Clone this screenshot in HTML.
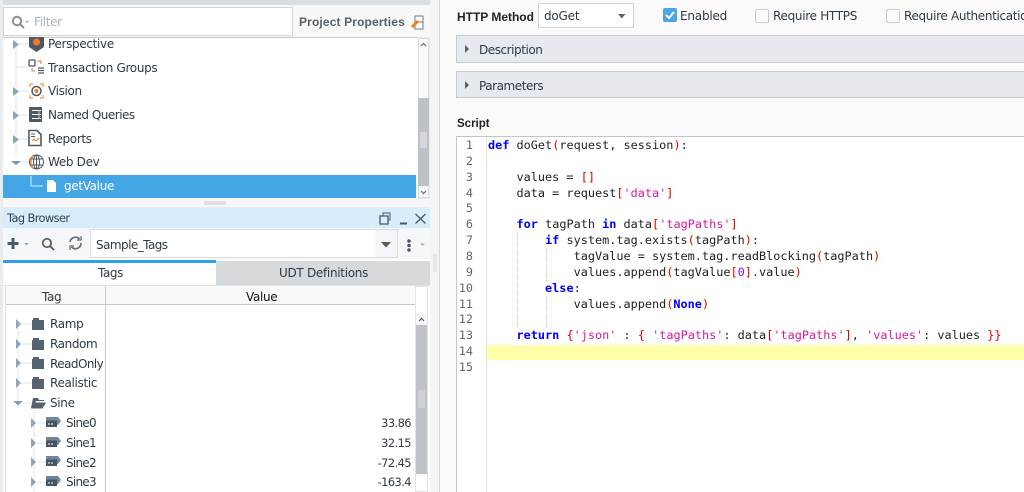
<!DOCTYPE html>
<html><head><meta charset="utf-8">
<style>
html,body{margin:0;padding:0}
body{width:1024px;height:492px;position:relative;overflow:hidden;background:#fafafa;font-family:"DejaVu Sans","Liberation Sans",sans-serif;font-size:12px;color:#2b3640}
.a{position:absolute}
.t{position:absolute;white-space:pre;line-height:16px;font-size:12px;letter-spacing:-.33px;color:#2e3a45}
.h{font-family:"Liberation Sans",sans-serif;font-weight:bold}
.c{position:absolute;left:488px;white-space:pre;font-family:"DejaVu Sans Mono",monospace;font-size:11.850px;line-height:16px;color:#222}
.n{position:absolute;width:16px;text-align:right;left:457px;font-family:"DejaVu Sans Mono",monospace;font-size:11.800px;line-height:16px;color:#666}
.k{color:#0000ff;font-weight:bold}.b{color:#e00000}.s{color:#d6189a}.p{color:#8a10e0}
svg{position:absolute;overflow:visible}
.r{text-align:right;width:60px;left:351px;font-size:11.400px;letter-spacing:-.55px}
.d{letter-spacing:-.75px}
</style></head><body>
<!-- left column -->
<div class="a" style="left:0;top:0;width:432px;height:492px;background:#e9ecef"></div>
<div class="a" style="left:3px;top:0;width:427px;height:5px;background:#d9dee2"></div>
<div class="a" style="left:3px;top:5px;width:427px;height:32px;background:#f8f8f8"></div>
<div class="a" style="left:3px;top:7px;width:290px;height:29px;background:#fff;border:1px solid #d3d7da;box-sizing:border-box"></div>
<svg style="left:0;top:0" width="60" height="40"><circle cx="17" cy="21" r="4.200" fill="none" stroke="#8a9096" stroke-width="2"/><path d="M20 24l4 4" stroke="#8a9096" stroke-width="2"/><path d="M25 21h4l-2 2z" fill="#a0a6ab"/></svg>
<div class="t" style="left:34px;top:14px;color:#aab4bd">Filter</div>
<div class="t h" style="left:299px;top:14px;color:#56616b;font-size:12px;letter-spacing:.14px">Project Properties</div>
<svg style="left:410px;top:14px" width="16" height="16"><path d="M5 2h8v13H5z" fill="#fff" stroke="#6c7a86"/><path d="M8 8h5" stroke="#6c7a86"/><path d="M2 13l6-6" stroke="#f47b20" stroke-width="3"/></svg>
<!-- tree -->
<div class="a" style="left:3px;top:37px;width:415px;height:162px;background:#fff;border-top:1px solid #c5cacf;box-sizing:border-box"></div>
<div class="a" style="left:3px;top:175px;width:413px;height:23px;background:#44a6e4"></div>
<div class="a" style="left:418px;top:38px;width:11px;height:160px;background:#f8f9fa;border:1px solid #d8dcdf;box-sizing:border-box"></div>
<div class="a" style="left:418px;top:98px;width:11px;height:88px;background:#bcc2c7"></div>
<svg style="left:418px;top:38px" width="11" height="160"><path d="M3 8l2.500-2.500L8 8" fill="none" stroke="#667" stroke-width="1.200"/><path d="M3 153l2.500 2.500L8 153" fill="none" stroke="#667" stroke-width="1.200"/><path d="M2 95h7M2 97h7M2 99h7M2 101h7M2 103h7M2 105h7M2 107h7M2 109h7" stroke="#eef0f1" stroke-width="1"/></svg>
<svg style="left:0;top:37px" width="60" height="162" fill="none">
<path d="M16 0V118M16 7h12M16 30h12M16 54h12M16 78h12M16 102h12M21 125h7" stroke="#dfe3e6"/>
<path d="M31 139V149H43" stroke="#d9ecf9" stroke-width="1"/>
<g fill="#8ea4b8"><path d="M13 3l6 4.500-6 4.500zM13 50l6 4.500-6 4.500zM13 74l6 4.500-6 4.500zM13 98l6 4.500-6 4.500z"/><path d="M11 124h10l-5 4z" fill="#7d92a5"/></g>
<path d="M29 0h15v10l-7.500 5-7.500-5z" fill="#4d5a66"/><circle cx="36.500" cy="5" r="3.500" fill="#f47b20"/>
<rect x="29" y="23" width="6" height="6" rx="1" stroke="#4d5a66" stroke-width="1.300"/><path d="M37 24h4v3M35 34h-3v-3" stroke="#f47b20"/><path d="M38 31h6M38 33.500h6M38 36h6" stroke="#4d5a66" stroke-width="1.300"/>
<circle cx="36.500" cy="54" r="4.500" stroke="#4d5a66" stroke-width="1.500"/><circle cx="36.500" cy="54" r="2" fill="#f47b20"/><path d="M30 50v-3h3M40 47h3v3M43 58v3h-3M33 61h-3v-3" stroke="#f47b20"/>
<rect x="29" y="70" width="13" height="15" rx="1" fill="#4d5a66"/><path d="M32 73.500h9M32 77.500h9M32 81.500h9" stroke="#fff"/><path d="M39 73v9" stroke="#f0b27a"/>
<path d="M29 93.500h8l4 4v11H29z" fill="#fff" stroke="#4d5a66" stroke-width="1.600"/><path d="M32 104l2-2 2 2 3-3" stroke="#f47b20"/><path d="M31 97h4M31 99.500h4" stroke="#4d5a66"/>
<circle cx="36.500" cy="125" r="7" fill="#fff" stroke="#4d5a66"/><ellipse cx="36.500" cy="125" rx="3" ry="7" stroke="#4d5a66"/><path d="M30 122h13M30 128h13M36.500 118v14" stroke="#4d5a66"/><path d="M33 119a9 9 0 0 0 0 12" stroke="#f47b20" stroke-width="1.500"/>
<path d="M47 143h6l3 3v9h-9z" fill="#fff"/>
</svg>
<div class="t" style="left:48px;top:36px">Perspective</div>
<div class="t" style="left:48px;top:60px">Transaction Groups</div>
<div class="t" style="left:48px;top:83px">Vision</div>
<div class="t" style="left:48px;top:107px;letter-spacing:-.5px">Named Queries</div>
<div class="t" style="left:48px;top:131px">Reports</div>
<div class="t" style="left:48px;top:154px">Web Dev</div>
<div class="t" style="left:64px;top:178px;color:#fff">getValue</div>
<!-- splitter -->
<div class="a" style="left:3px;top:199px;width:427px;height:8px;background:#f6f7f8"></div>
<svg style="left:204px;top:201px" width="26" height="5"><path d="M1 0v4M3 0v4M5 0v4M7 0v4M9 0v4M11 0v4M13 0v4M15 0v4M17 0v4M19 0v4M21 0v4" stroke="#c8ccd0"/></svg>
<!-- Tag Browser -->
<div class="a" style="left:3px;top:208px;width:427px;height:284px;background:#fff"></div>
<div class="a" style="left:3px;top:208px;width:427px;height:20px;background:#d6edfc"></div>
<div class="t" style="left:7px;top:210px;color:#35424d;font-size:11.400px;letter-spacing:-.6px">Tag Browser</div>
<svg style="left:375px;top:210px" width="55" height="18" fill="none" stroke="#48586a"><path d="M5 6v8h8V6z" stroke-width="1.300"/><path d="M8 6V3h7v7h-2" stroke-width="1"/><path d="M25 13.500h7" stroke-width="2"/><path d="M40.500 4l10 9.500M50.500 4l-10 9.500" stroke-width="1.300"/></svg>
<div class="a" style="left:3px;top:228px;width:427px;height:31px;background:#f6f7f8"></div>
<svg style="left:3px;top:228px" width="90" height="30" fill="none"><path d="M10 10v11M4.500 15.500h11" stroke="#4a5a6a" stroke-width="3"/><path d="M21 15h5l-2.500 2.500z" fill="#a7adb3"/><circle cx="44" cy="15" r="4.200" stroke="#4a5a6a" stroke-width="1.700"/><path d="M47 18l4 4" stroke="#4a5a6a" stroke-width="1.800"/><path d="M67 14a5.500 5.500 0 0 1 9.500-3M78 15a5.500 5.500 0 0 1-9.500 4" stroke="#5b6a78" stroke-width="1.600"/><path d="M78 8v4h-4M67 22v-4h4" stroke="#5b6a78" stroke-width="1.200"/></svg>
<div class="a" style="left:90px;top:229px;width:308px;height:29px;background:#fff;border:1px solid #dadde0;box-sizing:border-box"></div>
<div class="a" style="left:375px;top:230px;width:22px;height:27px;background:#f4f5f6"></div>
<div class="t" style="left:96px;top:237px;letter-spacing:-.55px">Sample_Tags</div>
<svg style="left:380px;top:240px" width="50" height="12"><path d="M1 2h10l-5 5.500z" fill="#4f5d6b"/><circle cx="29" cy="1" r="1.800" fill="#4a5a6a"/><circle cx="29" cy="5.500" r="1.800" fill="#4a5a6a"/><circle cx="29" cy="10" r="1.800" fill="#4a5a6a"/><path d="M40 3.500h5l-2.500 2.500z" fill="#a7adb3"/></svg>
<!-- tabs -->
<div class="a" style="left:3px;top:260px;width:213px;height:25px;background:#fff;border-top:3px solid #2d9fe6;box-sizing:border-box"></div>
<div class="a" style="left:216px;top:261px;width:214px;height:24px;background:#d7dadd"></div>
<div class="t" style="left:98px;top:265px;letter-spacing:-.4px">Tags</div>
<div class="t" style="left:279px;top:265px;letter-spacing:-.3px">UDT Definitions</div>
<div class="a" style="left:3px;top:285px;width:427px;height:1px;background:#dfe2e5"></div>
<!-- table -->
<div class="a" style="left:5px;top:286px;width:410px;height:19px;background:#f9f9f9;border-bottom:1px solid #c3c8cc;box-sizing:border-box"></div>
<div class="a" style="left:105px;top:286px;width:1px;height:206px;background:#c8ccd0"></div>
<div class="a" style="left:5px;top:286px;width:1px;height:206px;background:#dfe2e5"></div>
<div class="t" style="left:42px;top:289px">Tag</div>
<div class="t" style="left:246px;top:289px;color:#111">Value</div>
<div class="a" style="left:415px;top:286px;width:13px;height:206px;background:#fff;border:1px solid #e2e5e7;box-sizing:border-box"></div>
<div class="a" style="left:416px;top:313px;width:11px;height:12px;background:#f6f7f8"></div>
<div class="a" style="left:416px;top:325px;width:11px;height:149px;background:#bcc2c7"></div>
<svg style="left:416px;top:313px" width="11" height="110"><path d="M3 8l2.500-2.500L8 8" fill="none" stroke="#556" stroke-width="1.200"/><path d="M2 78h7M2 80h7M2 82h7M2 84h7M2 86h7M2 88h7M2 90h7M2 92h7M2 94h7" stroke="#dfe2e4"/></svg>
<svg style="left:0;top:305px" width="105" height="187" fill="none">
<path d="M18 19v84M18 19h14M18 39h14M18 58h14M18 78h14M24 98h7M34 105v82M36 118h10M36 138h10M36 157h10M36 177h10" stroke="#dfe3e6"/>
<g fill="#8ea4b8"><path d="M16 14l5 5-5 5zM16 34l5 5-5 5zM16 53l5 5-5 5zM16 73l5 5-5 5zM31 113l5 5-5 5zM31 133l5 5-5 5zM31 152l5 5-5 5zM31 172l5 5-5 5z"/><path d="M13 96h10l-5 4.500z" fill="#8a9eb0"/></g>
<g fill="#55626f"><path d="M32 15h12v10H32zM33 13h6v2h-6zM32 35h12v10H32zM33 33h6v2h-6zM32 54h12v10H32zM33 52h6v2h-6zM32 74h12v10H32zM33 72h6v2h-6z"/><path d="M31 103l2-10h5l1 2h5v1H36l-3 7z"/><path d="M31 103.500l3.500-6H46l-3.500 6z"/></g>
<g><path d="M46 112h12l3 4-3 4H46z" fill="#6f879d"/><rect x="46" y="115.500" width="11" height="6.500" fill="#47555f"/><path d="M48 119h2M51 119h2" stroke="#fff"/></g>
<g><path d="M46 132h12l3 4-3 4H46z" fill="#6f879d"/><rect x="46" y="135.500" width="11" height="6.500" fill="#47555f"/><path d="M48 139h2M51 139h2" stroke="#fff"/></g>
<g><path d="M46 151h12l3 4-3 4H46z" fill="#6f879d"/><rect x="46" y="154.500" width="11" height="6.500" fill="#47555f"/><path d="M48 158h2M51 158h2" stroke="#fff"/></g>
<g><path d="M46 171h12l3 4-3 4H46z" fill="#6f879d"/><rect x="46" y="174.500" width="11" height="6.500" fill="#47555f"/><path d="M48 178h2M51 178h2" stroke="#fff"/></g>
</svg>
<div class="t" style="left:50px;top:316px">Ramp</div>
<div class="t" style="left:50px;top:336px;letter-spacing:-.4px">Random</div>
<div class="t" style="left:50px;top:356px;letter-spacing:-.55px">ReadOnly</div>
<div class="t" style="left:50px;top:375px">Realistic</div>
<div class="t" style="left:50px;top:395px">Sine</div>
<div class="t d" style="left:66px;top:415px">Sine0</div>
<div class="t d" style="left:66px;top:435px">Sine1</div>
<div class="t d" style="left:66px;top:455px">Sine2</div>
<div class="t d" style="left:66px;top:474px">Sine3</div>
<div class="t r" style="top:415px">33.86</div>
<div class="t r" style="top:435px">32.15</div>
<div class="t r" style="top:455px">-72.45</div>
<div class="t r" style="top:474px">-163.4</div>
<!-- divider -->
<div class="a" style="left:430px;top:0;width:10px;height:492px;background:#f4f5f6;border-right:1px solid #d5d8db;box-sizing:border-box"></div>
<svg style="left:433px;top:254px" width="5" height="20"><path d="M0 1h4M0 3h4M0 5h4M0 7h4M0 9h4M0 11h4M0 13h4M0 15h4M0 17h4" stroke="#d5d8db"/></svg>
<!-- top options -->
<div class="t h" style="left:457px;top:9px;color:#222;font-size:12px;letter-spacing:-.02px">HTTP Method</div>
<div class="a" style="left:538px;top:3px;width:96px;height:25px;background:#fff;border:1px solid #d0d4d8;box-sizing:border-box"></div>
<div class="t" style="left:544px;top:8px;letter-spacing:-.2px">doGet</div>
<svg style="left:618px;top:13px" width="12" height="8"><path d="M0 1h7.500L3.750 5.500z" fill="#5b6874"/></svg>
<div class="a" style="left:663px;top:8px;width:14px;height:14px;background:#4aa6e5;border-radius:2px"></div>
<svg style="left:663px;top:8px" width="14" height="14"><path d="M3 7l3 3 5-6" fill="none" stroke="#fff" stroke-width="2"/></svg>
<div class="t" style="left:680px;top:8px;letter-spacing:-.2px">Enabled</div>
<div class="a" style="left:755px;top:9px;width:14px;height:14px;background:#fbfbfb;border:1px solid #c6cbcf;border-radius:2px;box-sizing:border-box"></div>
<div class="t" style="left:773px;top:8px;letter-spacing:-.3px">Require HTTPS</div>
<div class="a" style="left:886px;top:9px;width:14px;height:14px;background:#fbfbfb;border:1px solid #c6cbcf;border-radius:2px;box-sizing:border-box"></div>
<div class="t" style="left:904px;top:8px">Require Authentication</div>
<!-- collapsible -->
<div class="a" style="left:456px;top:35px;width:568px;height:28px;background:#e6e9ed;border:1px solid #c6cace;border-right:0;box-sizing:border-box"></div>
<div class="a" style="left:456px;top:71px;width:568px;height:27px;background:#e6e9ed;border:1px solid #c6cace;border-right:0;box-sizing:border-box"></div>
<svg style="left:464px;top:45px" width="10" height="50"><path d="M1 0l4 4-4 4zM1 36l4 4-4 4z" fill="#555f69"/></svg>
<div class="t" style="left:479px;top:42px;letter-spacing:-.45px">Description</div>
<div class="t" style="left:479px;top:78px;letter-spacing:-.45px">Parameters</div>
<div class="t h" style="left:457px;top:116px;color:#222;font-size:11.500px;letter-spacing:0">Script</div>
<!-- editor -->
<div class="a" style="left:456px;top:136px;width:568px;height:356px;background:#fff;border:1px solid #c2c6ca;border-right:0;border-bottom:0;box-sizing:border-box"></div>
<div class="a" style="left:486px;top:137px;width:1px;height:355px;background:#e0e3e6"></div>
<div class="a" style="left:487px;top:345px;width:537px;height:15px;background:#ffffaa"></div>
<svg style="left:517px;top:233px" width="40" height="100"><path d="M.5 0v95M29.500 15v34M29.500 64v31" stroke="#c9c9c9" stroke-dasharray="1 1"/></svg>
<div class="n" style="top:137px">1</div><div class="n" style="top:153px">2</div><div class="n" style="top:169px">3</div><div class="n" style="top:185px">4</div><div class="n" style="top:200px">5</div><div class="n" style="top:216px">6</div><div class="n" style="top:232px">7</div><div class="n" style="top:248px">8</div><div class="n" style="top:264px">9</div><div class="n" style="top:280px">10</div><div class="n" style="top:296px">11</div><div class="n" style="top:311px">12</div><div class="n" style="top:327px">13</div><div class="n" style="top:343px">14</div><div class="n" style="top:359px">15</div>
<div class="c" style="top:137px"><span class="k">def</span> doGet<span class="b">(</span>request, session<span class="b">)</span>:</div>
<div class="c" style="top:169px">    values = <span class="b">[]</span></div>
<div class="c" style="top:185px">    data = request<span class="b">[</span><span class="s">'data'</span><span class="b">]</span></div>
<div class="c" style="top:216px">    <span class="k">for</span> tagPath <span class="k">in</span> data<span class="b">[</span><span class="s">'tagPaths'</span><span class="b">]</span></div>
<div class="c" style="top:232px">        <span class="k">if</span> system.tag.exists<span class="b">(</span>tagPath<span class="b">)</span>:</div>
<div class="c" style="top:248px">            tagValue = system.tag.readBlocking<span class="b">(</span>tagPath<span class="b">)</span></div>
<div class="c" style="top:264px">            values.append<span class="b">(</span>tagValue<span class="b">[</span><span class="p">0</span><span class="b">]</span>.value<span class="b">)</span></div>
<div class="c" style="top:280px">        <span class="k">else</span>:</div>
<div class="c" style="top:296px">            values.append<span class="b">(</span><span class="k">None</span><span class="b">)</span></div>
<div class="c" style="top:327px">    <span class="k">return</span> <span class="b">{</span><span class="s">'json'</span> : <span class="b">{</span> <span class="s">'tagPaths'</span>: data<span class="b">[</span><span class="s">'tagPaths'</span><span class="b">]</span>, <span class="s">'values'</span>: values <span class="b">}}</span></div>
</body></html>
